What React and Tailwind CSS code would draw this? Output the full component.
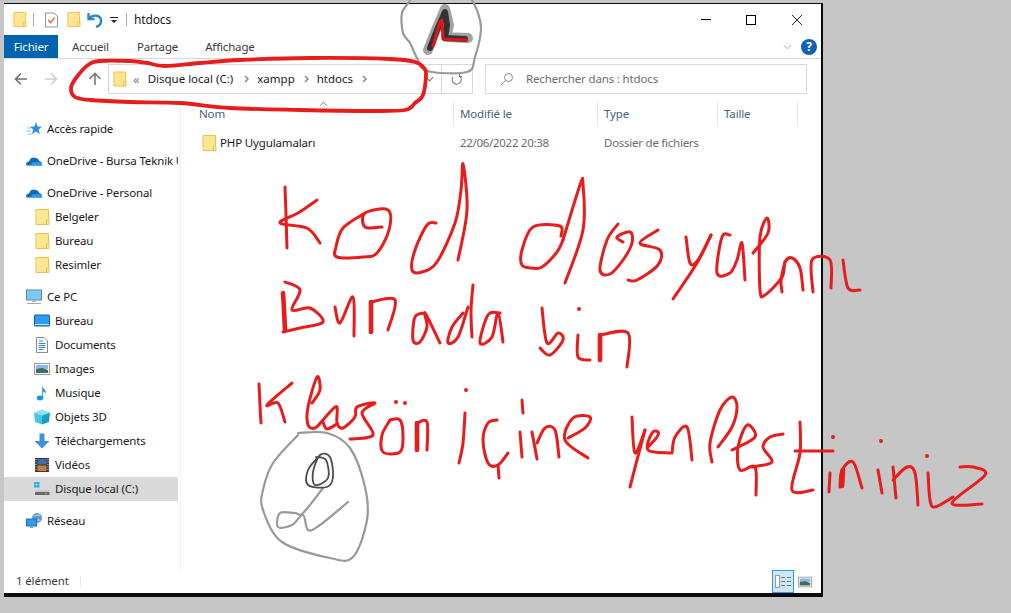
import React from 'react'

// freehand line that goes through all of its points (catmull-rom)
const smooth = (pts) => {
  let d = `M${pts[0][0]} ${pts[0][1]}`
  for (let i = 0; i < pts.length - 1; i++) {
    const p0 = pts[i - 1] || pts[i]
    const p1 = pts[i]
    const p2 = pts[i + 1]
    const p3 = pts[i + 2] || p2
    const c1x = p1[0] + (p2[0] - p0[0]) / 6
    const c1y = p1[1] + (p2[1] - p0[1]) / 6
    const c2x = p2[0] - (p3[0] - p1[0]) / 6
    const c2y = p2[1] - (p3[1] - p1[1]) / 6
    d += ` C${c1x.toFixed(1)} ${c1y.toFixed(1)} ${c2x.toFixed(1)} ${c2y.toFixed(1)} ${p2[0]} ${p2[1]}`
  }
  return d
}

const redStrokes = [
  // K
  [[285, 187], [286, 215], [287, 248]],
  [[317, 200], [298, 213], [280, 223], [307, 228], [320, 243]],
  // o
  [[382, 227], [365, 227], [365, 213], [388, 210], [389, 230], [377, 253], [363, 257], [337, 257], [336, 247], [343, 228], [365, 213]],
  // d
  [[436, 223], [427, 225], [415, 250], [412, 270], [422, 272], [437, 262], [455, 223], [461, 190], [463, 164], [467, 210], [458, 260]],
  // d
  [[561, 236], [560, 226], [533, 227], [522, 250], [522, 265], [532, 268], [542, 267], [557, 252], [563, 240]],
  [[563, 240], [580, 185], [583, 184], [583, 230], [565, 283]],
  // o s
  [[618, 224], [607, 240], [600, 270], [610, 274], [623, 260], [632, 243], [630, 232], [617, 237], [623, 242]],
  [[658, 230], [640, 243], [660, 250], [658, 265], [637, 280], [628, 280]],
  // y
  [[686, 237], [690, 263], [698, 260], [711, 235]],
  [[711, 235], [697, 263], [673, 299]],
  // a
  [[730, 235], [722, 237], [717, 273], [730, 273], [737, 260], [742, 243], [745, 280]],
  // l a
  [[753, 253], [768, 233], [767, 218], [760, 237], [760, 290], [765, 295], [782, 277], [785, 262], [792, 258], [800, 268], [803, 290]],
  [[785, 262], [781, 280], [782, 292]],
  // r ı
  [[813, 292], [812, 260], [830, 260], [831, 288]],
  [[843, 260], [848, 288], [860, 290]],

  // B
  [[285, 282], [300, 290], [292, 310], [310, 308], [323, 322], [300, 328], [283, 332]],
  // u n
  [[335, 307], [340, 323], [353, 297], [354, 336]],
  [[371, 302], [395, 300], [388, 330]],
  // a d a a
  [[425, 313], [415, 317], [413, 340], [420, 342], [427, 327], [425, 313], [440, 343]],
  [[463, 313], [452, 327], [448, 343], [458, 337], [468, 307]],
  [[473, 285], [471, 310], [472, 337]],
  [[500, 313], [488, 315], [480, 343], [492, 337], [498, 313], [503, 342]],
  // b i n
  [[542, 308], [547, 343], [558, 333], [563, 340], [550, 355], [540, 348]],
  [[578, 335], [578, 357], [590, 360]],
  [[600, 335], [628, 333], [627, 367]],

  // K l a s
  [[259, 384], [260, 405], [261, 423]],
  [[292, 383], [267, 405], [278, 403], [285, 422]],
  [[312, 403], [320, 390], [317, 377], [308, 407], [308, 425], [315, 428], [323, 420], [330, 412], [337, 407], [337, 423], [343, 428], [355, 417], [357, 407], [375, 403], [362, 413], [373, 435], [350, 439]],
  [[323, 422], [327, 429], [337, 424]],
  // ö n
  [[390, 420], [382, 435], [383, 452], [400, 452], [403, 437], [400, 420], [390, 420]],
  [[417, 423], [427, 422], [427, 450]],
  // i ç i n e
  [[465, 413], [463, 443], [459, 463]],
  [[497, 420], [488, 423], [483, 440], [488, 463], [498, 465], [508, 453]],
  [[498, 465], [499, 478]],
  [[522, 400], [523, 413]],
  [[520, 432], [522, 457]],
  [[532, 432], [537, 459]],
  [[537, 443], [545, 428], [555, 430], [559, 457]],
  [[568, 438], [585, 428], [590, 417], [573, 418], [565, 440], [588, 458]],
  // y e n
  [[632, 417], [635, 453], [645, 430]],
  [[645, 430], [637, 460], [630, 487]],
  [[648, 447], [657, 437], [658, 432], [652, 433], [648, 450], [670, 453]],
  [[672, 453], [675, 437], [687, 427], [692, 460]],
  // l e s
  [[712, 462], [710, 443], [720, 410], [732, 397], [737, 407], [732, 427], [718, 447]],
  [[732, 450], [755, 437], [747, 425], [738, 447], [740, 470], [755, 467], [756, 495]],
  [[783, 434], [770, 437], [763, 447], [772, 462], [752, 467]],
  // t
  [[800, 422], [800, 453], [792, 490], [813, 490]],
  [[795, 451], [815, 451], [833, 451]],
  // i n i n i z
  [[830, 473], [829, 492]],
  [[840, 487], [842, 470], [853, 462], [862, 488]],
  [[878, 470], [882, 493]],
  [[893, 467], [896, 498]],
  [[893, 480], [907, 467], [915, 473], [918, 505]],
  [[928, 473], [930, 500], [935, 507], [953, 497]],
  [[960, 467], [973, 467], [985, 475], [952, 503], [982, 504]],
]

// stems that were gone over twice
const thickStrokes = [
  [[283, 293], [284, 310], [285, 330]],
  [[371, 332], [371, 302]],
  [[417, 450], [417, 423]],
  [[600, 360], [600, 335]],
  [[842, 486], [843, 470]],
]

const redDots = [
  [396, 402], [405, 403], [466, 390], [579, 309], [833, 437], [881, 441], [927, 456],
]

// address bar circle
const addressLoop = [
  [148, 63], [130, 61], [100, 61], [88, 65], [76, 78], [71, 88], [75, 97], [90, 100], [130, 102], [180, 103], [230, 108], [300, 110], [370, 111], [405, 110], [415, 103], [423, 95], [426, 75], [424, 68], [415, 62], [390, 59], [310, 58], [240, 60], [200, 63], [165, 66], [148, 63],
]

const greyStrokes = [
  [[410, 1], [402, 13], [403, 33], [410, 43], [417, 58], [427, 71], [467, 72], [475, 57], [481, 30], [478, 13], [472, 0]],
  [[298, 433], [327, 433], [350, 448], [365, 487], [367, 520], [353, 557], [330, 558], [282, 542], [263, 510], [263, 490], [273, 463], [298, 435]],
  [[323, 488], [303, 513], [295, 513], [280, 513], [278, 527], [292, 525], [303, 515], [308, 530], [320, 525], [348, 502]],
]

const Sketch = () => (
  <svg viewBox="0 0 1011 613" className="absolute top-0 left-0 w-[1011px] h-[613px] pointer-events-none" fill="none" strokeLinecap="round" strokeLinejoin="round">
    {greyStrokes.map((s, i) => (
      <path key={i} d={smooth(s)} stroke="#999999" strokeWidth="2.2" />
    ))}
    <path d={smooth([[320, 455], [308, 470], [308, 485], [327, 487], [333, 477], [330, 457], [320, 455], [313, 472], [315, 485], [328, 478], [326, 460], [316, 457]])} stroke="#4a4a4a" strokeWidth="1.8" />
    <path d="M428 50 L436 30 L445 9 L449 25 L446 37 L468 38" stroke="#555555" strokeWidth="10" opacity="0.55" />
    <path d="M430 48 L437 30 L445 12 L447 25 L445 38 L465 39" stroke="#1e1e1e" strokeWidth="6" opacity="0.85" />
    <path d="M433 46 L440 22 L442 20 L443 39 L467 40" stroke="#e0161c" strokeWidth="3" />
    <path d={smooth(addressLoop)} stroke="#e81c1c" strokeWidth="3.8" />
    {redStrokes.map((s, i) => (
      <path key={i} d={smooth(s)} stroke="#e81c1c" strokeWidth="3" />
    ))}
    {thickStrokes.map((s, i) => (
      <path key={i} d={smooth(s)} stroke="#e81c1c" strokeWidth="4.6" />
    ))}
    {redDots.map(([x, y], i) => (
      <circle key={i} cx={x} cy={y} r="2" fill="#e81c1c" />
    ))}
  </svg>
)

const Folder = ({ className = 'w-4 h-4' }) => (
  <svg viewBox="0 0 16 16" className={className}>
    <path d="M2 0.5 H14.5 V12 H13 V15.5 H2 Z" fill="#ffe690" stroke="#eec14e" />
    <path d="M12.5 11 H15 V15.5 H12.5 Z" fill="#ffe690" stroke="#eec14e" />
  </svg>
)

const Star = () => (
  <svg viewBox="0 0 16 16" className="w-4 h-4">
    <path d="M10 1 L11.6 5.4 L16 5.7 L12.6 8.5 L13.8 13 L10 10.5 L6 13 L7.2 8.6 L4 5.8 L8.4 5.4 Z" fill="#2b8fe3" />
    <path d="M1 7 H5 M0 10 H5 M2 13 H6" stroke="#7cc0f2" strokeWidth="1" />
  </svg>
)

const Cloud = () => (
  <svg viewBox="0 0 16 16" className="w-4 h-4">
    <path d="M0 12 C0 9 2 8.5 3 8.5 C4 5 7 3.5 9.5 5 C12 5 13 7 13 8 C15 8 16 10 16 12.5 H1 Z" fill="#0f6cbd" />
    <path d="M5 12.5 C6 9 9 8.5 11 9.5 C13 8 16 10 16 12.5 Z" fill="#2a9be8" />
  </svg>
)

const Monitor = () => (
  <svg viewBox="0 0 16 16" className="w-4 h-4">
    <rect x="0.5" y="1" width="15" height="10" fill="#7cc8f5" stroke="#5a8cb0" />
    <path d="M6 11 H10 V13 H6 Z" fill="#a9b7c2" />
    <path d="M1 14.5 H15" stroke="#9aa7b2" />
  </svg>
)

const Desktop = () => (
  <svg viewBox="0 0 16 16" className="w-4 h-4">
    <rect x="0.5" y="2" width="15" height="11" rx="0.5" fill="#2d9cf0" stroke="#0f5f9e" />
    <path d="M1 11.5 H15" stroke="#cfe9fb" />
  </svg>
)

const Doc = () => (
  <svg viewBox="0 0 16 16" className="w-4 h-4">
    <path d="M2.5 0.5 H10 L13.5 4 V15.5 H2.5 Z" fill="#fff" stroke="#8a8a8a" />
    <path d="M5 4 H9 M4.5 6.5 H11.5 M4.5 8.5 H11.5 M4.5 10.5 H11.5 M4.5 12.5 H9" stroke="#2a86d8" />
  </svg>
)

const Pic = ({ className = 'w-4 h-4' }) => (
  <svg viewBox="0 0 16 16" className={className}>
    <rect x="0.5" y="2.5" width="15" height="11" fill="#fff" stroke="#9a9a9a" />
    <rect x="2" y="4" width="12" height="4" fill="#8cb8e8" />
    <path d="M2 8 L8 7 L14 9 V12 H2 Z" fill="#3f6b5c" />
  </svg>
)

const Note = () => (
  <svg viewBox="0 0 16 16" className="w-4 h-4">
    <ellipse cx="6" cy="13" rx="3.2" ry="2.4" fill="#1a8fe8" />
    <path d="M8.2 13 V1 C9 4 12.5 5 12 9 C11.5 7.5 10 6.5 9.2 6.5 V13 Z" fill="#1a8fe8" />
  </svg>
)

const Cube = () => (
  <svg viewBox="0 0 16 16" className="w-4 h-4">
    <path d="M8 0.5 L16 3.5 L8 6.5 L0 3.5 Z" fill="#8fe4ef" />
    <path d="M0 3.5 L8 6.5 V15.5 L1 13 Z" fill="#48c6dc" />
    <path d="M16 3.5 L8 6.5 V15.5 L15 13 Z" fill="#16a1c4" />
  </svg>
)

const Down = () => (
  <svg viewBox="0 0 16 16" className="w-4 h-4">
    <path d="M5.5 0.5 H10.5 V8 H15.5 L8 15.5 L0.5 8 H5.5 Z" fill="#3f90dc" />
  </svg>
)

const Film = () => (
  <svg viewBox="0 0 16 16" className="w-4 h-4">
    <rect x="1" y="1" width="14" height="14" fill="#3a3a3a" />
    <rect x="3.5" y="2" width="9" height="5.5" fill="#3a6ea8" />
    <rect x="3.5" y="8.5" width="9" height="5.5" fill="#c6823a" />
    <path d="M2 2 V14 M14 2 V14" stroke="#ddd" strokeDasharray="1 1.5" />
  </svg>
)

const Drive = () => (
  <svg viewBox="0 0 16 16" className="w-4 h-4">
    <path d="M0 1 H2.5 V3.5 H0 Z M3 1 H5.5 V3.5 H3 Z M0 4 H2.5 V6.5 H0 Z M3 4 H5.5 V6.5 H3 Z" fill="#22a7f0" />
    <path d="M2 9 H14.5 L15.5 11 V14 H1 V11 Z" fill="#c9c9c9" />
    <rect x="1" y="11" width="14.5" height="3" fill="#6a6a6a" />
    <rect x="11.5" y="12" width="1.5" height="1" fill="#56e05e" />
  </svg>
)

const Network = () => (
  <svg viewBox="0 0 16 16" className="w-4 h-4">
    <circle cx="11" cy="5" r="5" fill="#5f9ad0" />
    <path d="M8 3 C10 1.5 12 3 14 2 M8 7 H14" stroke="#cfe3f4" />
    <rect x="0.5" y="6" width="10" height="7" fill="#2f9cef" stroke="#2a6ca8" />
    <path d="M4 14.5 H7 M5.5 13 V15" stroke="#8a9aa8" />
  </svg>
)

const NavRow = ({ icon, label, indent, active, className = '' }) => (
  <div className={`h-6 flex items-center whitespace-nowrap overflow-hidden w-[174px] ${indent ? 'pl-[30px]' : 'pl-[22px]'} ${active ? 'bg-[#d9d9d9]' : ''} ${className}`}>
    <span className="w-4 h-4 mr-[5px] shrink-0 flex">{icon}</span>
    <span className="text-[#1a1a1a]">{label}</span>
  </div>
)

const Crumb = () => (
  <svg viewBox="0 0 8 8" className="w-2 h-2 mx-[4px]" fill="none" stroke="#8a8a8a" strokeWidth="1.5">
    <path d="M2 1 L5 4 L2 7" />
  </svg>
)

const Arrow = ({ color, rotate = '' }) => (
  <svg viewBox="0 0 14 14" className={`w-[14px] h-[14px] ${rotate}`} fill="none" stroke={color} strokeWidth="1.6">
    <path d="M13 7 H1.5 M7 1.5 L1.5 7 L7 12.5" />
  </svg>
)

const Column = ({ label, className }) => (
  <div className={`h-[25px] flex items-center border-r border-[#e5e5e5] text-[#4c607a] ${className}`}>
    {label}
  </div>
)

export default function App() {
  return (
    <div className="relative w-[1011px] h-[613px] overflow-hidden bg-[#c6c6c6] pt-[3px] pl-[4px] font-['Noto_Sans',sans-serif] text-[11.5px] tracking-[-0.15px] leading-none">
      <div className="w-[819px] h-[594px] bg-white border-t border-r-2 border-b-4 border-[#0a0a0f] flex flex-col">
        {/* Title bar */}
        <div className="h-[31px] flex items-center shrink-0 text-[#1a1a1a]">
          <Folder className="w-[15px] h-[17px] ml-[8px]" />
          <div className="w-px h-[13px] bg-[#a8a8a8] ml-[6px]" />
          <svg viewBox="0 0 14 16" className="w-[13px] h-[16px] ml-[11px]" fill="none">
            <path d="M0.5 0.5 H9.5 L13.5 4 V15.5 H0.5 Z" fill="#fff" stroke="#8a8a8a" />
            <path d="M3.5 8 L6 11 L10.5 5.5" stroke="#e8622a" strokeWidth="1.4" />
          </svg>
          <Folder className="w-[15px] h-[17px] ml-[8px]" />
          <svg viewBox="0 0 16 16" className="w-[16px] h-[16px] ml-[6px]" fill="none" stroke="#2a86d0" strokeWidth="2.4">
            <path d="M1.5 1 V7 H7.5" />
            <path d="M2 6.5 C6 2 13.5 3 14 8 C14.5 11.5 12 14 9 15" />
          </svg>
          <svg viewBox="0 0 8 8" className="w-2 h-2 ml-[7px]">
            <path d="M0 1 H8 V2 H0 Z M1 4 H7 L4 7 Z" fill="#222" />
          </svg>
          <div className="w-px h-[13px] bg-[#a8a8a8] ml-[8px]" />
          <span className="ml-[7px] text-[12px]">htdocs</span>
          <div className="ml-auto flex items-center pr-[19px]">
            <div className="w-[10px] h-px bg-black" />
            <div className="w-[10px] h-[10px] border border-black ml-[35px]" />
            <svg viewBox="0 0 10 10" className="w-[10px] h-[10px] ml-[36px]" fill="none" stroke="#111" strokeWidth="0.9">
              <path d="M0 0 L10 10 M10 0 L0 10" />
            </svg>
          </div>
        </div>

        {/* Ribbon tabs */}
        <div className="h-[24px] flex items-center shrink-0 border-b border-[#dadada] text-[#3a3a3a]">
          <div className="w-[54px] h-[23px] bg-[#0063b1] text-white flex items-center justify-center">Fichier</div>
          <span className="ml-[14px]">Accueil</span>
          <span className="ml-[28px]">Partage</span>
          <span className="ml-[27px]">Affichage</span>
          <div className="ml-auto flex items-center pr-[4px]">
            <svg viewBox="0 0 10 6" className="w-[9px] h-[6px] mr-[9px]" fill="none" stroke="#a0a0a0">
              <path d="M1 1 L5 5 L9 1" />
            </svg>
            <div className="w-4 h-4 rounded-full bg-[#0f62b8] text-white flex items-center justify-center font-bold text-[12px]">?</div>
          </div>
        </div>

        {/* Address and search */}
        <div className="h-[41px] flex items-start pt-[5px] shrink-0">
          <div className="w-[104px] h-[29px] flex items-center shrink-0">
            <span className="ml-[10px]"><Arrow color="#6f6f6f" /></span>
            <span className="ml-[16px]"><Arrow color="#cfcfcf" rotate="rotate-180" /></span>
            <span className="ml-[30px]"><Arrow color="#7a7a7a" rotate="rotate-90" /></span>
          </div>
          <div className="w-[365px] h-[30px] border border-[#d9d9d9] flex items-center shrink-0 text-[#1a1a1a] tracking-normal">
            <Folder className="w-[15px] h-[16px] ml-[3px]" />
            <span className="ml-[6px] text-[#808080] text-[13px]">«</span>
            <span className="ml-[8px] whitespace-nowrap">Disque local (C:)</span>
            <span className="ml-[6px]"><Crumb /></span>
            <span className="ml-[2px]">xampp</span>
            <span className="ml-[4px]"><Crumb /></span>
            <span className="ml-[2px]">htdocs</span>
            <span className="ml-[4px]"><Crumb /></span>
            <svg viewBox="0 0 10 6" className="ml-auto mr-[7px] w-[9px] h-[6px]" fill="none" stroke="#808080" strokeWidth="1.3">
              <path d="M1 1 L5 5 L9 1" />
            </svg>
            <div className="w-[31px] h-full border-l border-[#d9d9d9] flex items-center justify-center">
              <svg viewBox="0 0 12 12" className="w-3 h-3" fill="none" stroke="#777" strokeWidth="1.2">
                <path d="M8.5 1 V3.5 H11 M8.5 3 A4.5 4.5 0 1 1 2 4" />
              </svg>
            </div>
          </div>
          <div className="w-[322px] h-[30px] ml-[12px] border border-[#d9d9d9] flex items-center shrink-0 text-[#6d6d6d]">
            <svg viewBox="0 0 14 14" className="w-[14px] h-[14px] ml-[14px]" fill="none" stroke="#8a8a8a">
              <circle cx="8.5" cy="5.5" r="4" />
              <path d="M5.5 8.5 L1 13" />
            </svg>
            <span className="ml-[12px]">Rechercher dans : htdocs</span>
          </div>
        </div>

        {/* Main */}
        <div className="flex-1 flex min-h-0">
          <div className="w-[177px] shrink-0 border-r border-[#f0f0f0] pt-[17px]">
            <NavRow icon={<Star />} label="Accès rapide" />
            <NavRow icon={<Cloud />} label="OneDrive - Bursa Teknik Universitesi" className="mt-2" />
            <NavRow icon={<Cloud />} label="OneDrive - Personal" className="mt-2" />
            <NavRow icon={<Folder />} label="Belgeler" indent />
            <NavRow icon={<Folder />} label="Bureau" indent />
            <NavRow icon={<Folder />} label="Resimler" indent />
            <NavRow icon={<Monitor />} label="Ce PC" className="mt-2" />
            <NavRow icon={<Desktop />} label="Bureau" indent />
            <NavRow icon={<Doc />} label="Documents" indent />
            <NavRow icon={<Pic />} label="Images" indent />
            <NavRow icon={<Note />} label="Musique" indent />
            <NavRow icon={<Cube />} label="Objets 3D" indent />
            <NavRow icon={<Down />} label="Téléchargements" indent />
            <NavRow icon={<Film />} label="Vidéos" indent />
            <NavRow icon={<Drive />} label="Disque local (C:)" indent active />
            <NavRow icon={<Network />} label="Réseau" className="mt-2" />
          </div>
          <div className="flex-1 min-w-0">
            <div className="relative flex pt-[1px]">
              <Column label="Nom" className="w-[273px] pl-[18px]" />
              <Column label="Modifié le" className="w-[144px] pl-[6px]" />
              <Column label="Type" className="w-[120px] pl-[6px]" />
              <Column label="Taille" className="w-[80px] pl-[6px]" />
              <svg viewBox="0 0 10 6" className="absolute left-[138px] top-[1px] w-[9px] h-[6px]" fill="none" stroke="#6d6d6d">
                <path d="M1 5 L5 1 L9 5" />
              </svg>
            </div>
            <div className="h-6 mt-[5px] flex items-center">
              <div className="w-[273px] flex items-center pl-[20px]">
                <Folder />
                <span className="ml-[3px] text-[#1a1a1a]">PHP Uygulamaları</span>
              </div>
              <div className="w-[144px] pl-[6px] text-[#6d6d6d] tracking-[-0.3px]">22/06/2022 20:38</div>
              <div className="pl-[6px] text-[#6d6d6d] tracking-[-0.25px]">Dossier de fichiers</div>
            </div>
          </div>
        </div>

        {/* Status bar */}
        <div className="h-[23px] shrink-0 flex items-center text-[#3a3a3a]">
          <span className="ml-[12px] mb-[2px]">1 élément</span>
          <div className="w-px h-[12px] bg-[#ececec] ml-[11px]" />
          <div className="ml-auto flex items-center pr-[9px]">
            <div className="w-[22px] h-[23px] bg-[#cce8f6] border border-[#2e9fd8] flex items-center justify-center">
              <svg viewBox="0 0 17 13" className="w-[17px] h-[13px]" fill="none">
                <rect x="0.5" y="0.5" width="4" height="12" fill="#fff" stroke="#999" />
                <path d="M6 2.5 H10 M12 2.5 H16 M6 6.5 H10 M12 6.5 H16 M6 10.5 H10 M12 10.5 H16" stroke="#777" />
              </svg>
            </div>
            <span className="ml-[4px] flex"><Pic className="w-[14px] h-[14px]" /></span>
          </div>
        </div>
      </div>
      <Sketch />
    </div>
  )
}
